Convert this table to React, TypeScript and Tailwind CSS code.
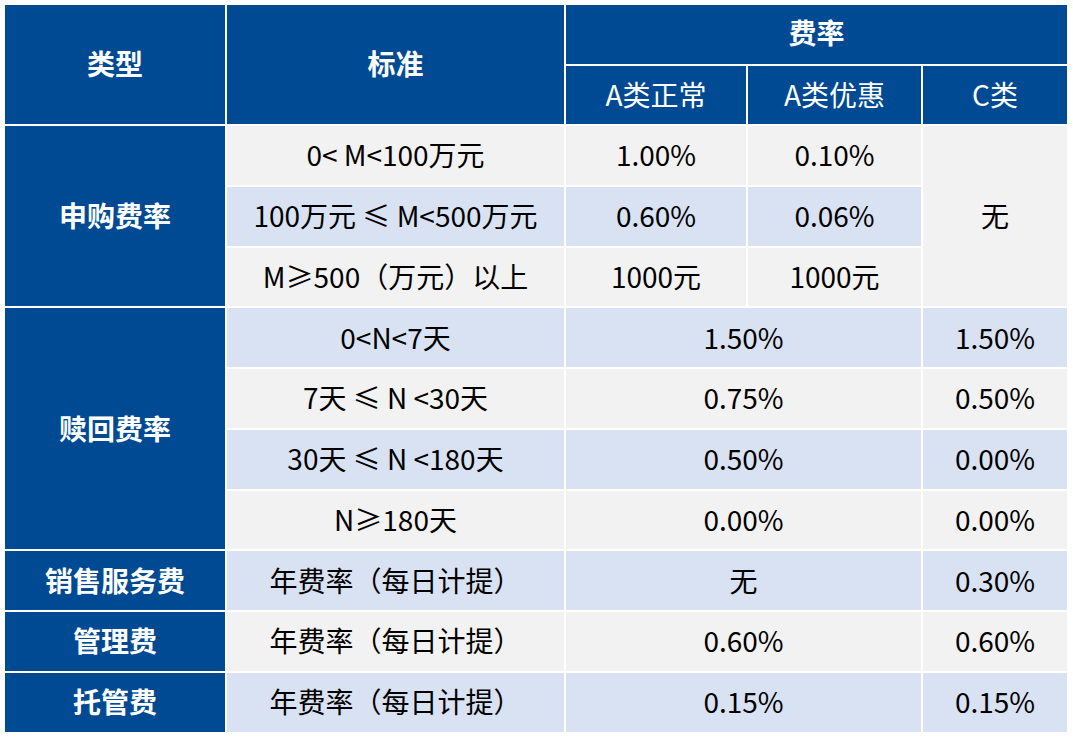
const head = "bg-[#004a93] text-white font-bold";
const gray = "bg-[#f2f2f2]";
const blue = "bg-[#d9e2f3]";

type Row = { cells: { text: string; span?: number; rows?: number }[]; tone: string; label?: { text: string; rows: number } };

const rows: Row[] = [
  {
    tone: gray,
    label: { text: "申购费率", rows: 3 },
    cells: [{ text: "0< M<100万元" }, { text: "1.00%" }, { text: "0.10%" }, { text: "无", rows: 3 }],
  },
  { tone: blue, cells: [{ text: "100万元 ≤ M<500万元" }, { text: "0.60%" }, { text: "0.06%" }] },
  { tone: gray, cells: [{ text: "M≥500（万元）以上" }, { text: "1000元" }, { text: "1000元" }] },
  {
    tone: blue,
    label: { text: "赎回费率", rows: 4 },
    cells: [{ text: "0<N<7天" }, { text: "1.50%", span: 2 }, { text: "1.50%" }],
  },
  { tone: gray, cells: [{ text: "7天 ≤ N <30天" }, { text: "0.75%", span: 2 }, { text: "0.50%" }] },
  { tone: blue, cells: [{ text: "30天 ≤ N <180天" }, { text: "0.50%", span: 2 }, { text: "0.00%" }] },
  { tone: gray, cells: [{ text: "N≥180天" }, { text: "0.00%", span: 2 }, { text: "0.00%" }] },
  {
    tone: blue,
    label: { text: "销售服务费", rows: 1 },
    cells: [{ text: "年费率（每日计提）" }, { text: "无", span: 2 }, { text: "0.30%" }],
  },
  {
    tone: gray,
    label: { text: "管理费", rows: 1 },
    cells: [{ text: "年费率（每日计提）" }, { text: "0.60%", span: 2 }, { text: "0.60%" }],
  },
  {
    tone: blue,
    label: { text: "托管费", rows: 1 },
    cells: [{ text: "年费率（每日计提）" }, { text: "0.15%", span: 2 }, { text: "0.15%" }],
  },
];

export default function App() {
  return (
    <div
      className="w-[1073px] h-[737px] bg-white p-[3px] overflow-hidden"
      style={{ fontFamily: '"Noto Sans CJK SC", "Noto Sans", sans-serif' }}
    >
      <table className="table-fixed border-separate border-spacing-[2px] text-[28px] text-center text-black">
        <colgroup>
          <col className="w-[220px]" />
          <col className="w-[337px]" />
          <col className="w-[180px]" />
          <col className="w-[173px]" />
          <col className="w-[144px]" />
        </colgroup>
        <thead>
          <tr className="h-[58.5px]">
            <th rowSpan={2} className={`${head} pb-[4px] leading-none`}>类型</th>
            <th rowSpan={2} className={`${head} pb-[4px] leading-none`}>标准</th>
            <th colSpan={3} className={`${head} pb-[4px] leading-none`}>费率</th>
          </tr>
          <tr className="h-[58.5px]">
            <th className={`${head} font-normal pb-[2px] leading-none`}>A类正常</th>
            <th className={`${head} font-normal pb-[2px] leading-none`}>A类优惠</th>
            <th className={`${head} font-normal pb-[2px] leading-none`}>C类</th>
          </tr>
        </thead>
        <tbody>
          {rows.map((r, i) => (
            <tr key={i} className="h-[58.75px]">
              {r.label && (
                <td rowSpan={r.label.rows} className={`${head} leading-none pb-[2px]`}>
                  {r.label.text}
                </td>
              )}
              {r.cells.map((c, j) => (
                <td
                  key={j}
                  colSpan={c.span}
                  rowSpan={c.rows}
                  className={`${c.rows ? gray : r.tone} p-0 pb-[2px] leading-none whitespace-nowrap`}
                >
                  {c.text}
                </td>
              ))}
            </tr>
          ))}
        </tbody>
      </table>
    </div>
  );
}
